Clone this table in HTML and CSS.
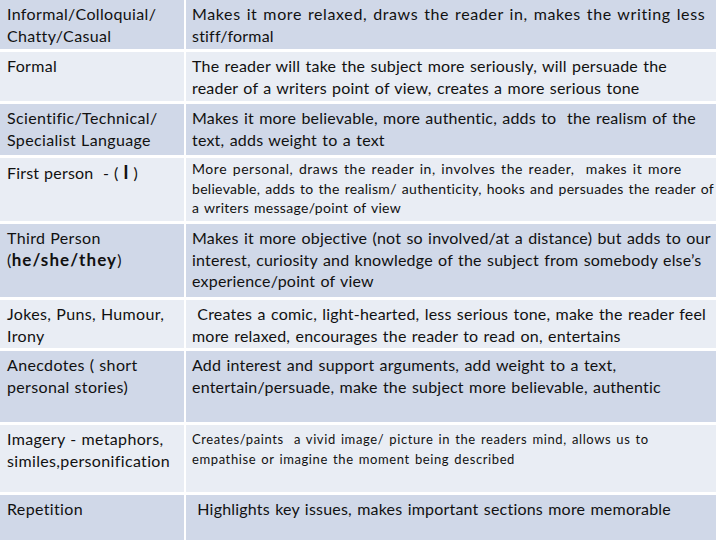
FILE: index.html
```html
<!DOCTYPE html>
<html>
<head>
<meta charset="utf-8">
<link rel="stylesheet" href="styles.css">
</head>
<body>
<div class="table">
  <div class="cell key dark">Informal/Colloquial/<br>Chatty/Casual</div>
  <div class="cell desc dark"><span class="wide">Makes it more relaxed, draws the reader in, makes the writing less</span><br>stiff/formal</div>

  <div class="cell key light">Formal</div>
  <div class="cell desc light">The reader will take the subject more seriously, will persuade the<br>reader of a writers point of view, creates a more serious tone</div>

  <div class="cell key dark">Scientific/Technical/<br>Specialist Language</div>
  <div class="cell desc dark">Makes it more believable, more authentic, adds to&nbsp; the realism of the<br>text, adds weight to a text</div>

  <div class="cell key light first">First person&nbsp; - ( <span class="big">I</span> )</div>
  <div class="cell desc light small tight"><span class="wider">More personal, draws the reader in, involves the reader,&nbsp; makes it more</span><br>believable, adds to the realism/ authenticity, hooks and persuades the reader of<br>a writers message/point of view</div>

  <div class="cell key dark">Third Person<br>(<span class="bold">he/she/they</span>)</div>
  <div class="cell desc dark">Makes it more objective (not so involved/at a distance) but adds to our<br>interest, curiosity and knowledge of the subject from somebody else’s<br>experience/point of view</div>

  <div class="cell key light">Jokes, Puns, Humour,<br>Irony</div>
  <div class="cell desc light">&nbsp;Creates a comic, light-hearted, less serious tone, make the reader feel<br>more relaxed, encourages the reader to read on, entertains</div>

  <div class="cell key dark">Anecdotes ( short<br>personal stories)</div>
  <div class="cell desc dark">Add interest and support arguments, add weight to a text,<br>entertain/persuade, make the subject more believable, authentic</div>

  <div class="cell key light">Imagery - metaphors,<br>similes,personification</div>
  <div class="cell desc light smaller">Creates/paints&nbsp; a vivid image/ picture in the readers mind, allows us to<br>empathise or imagine the moment being described</div>

  <div class="cell key dark">Repetition</div>
  <div class="cell desc dark">&nbsp;Highlights key issues, makes important sections more memorable</div>
</div>
</body>
</html>
```

FILE: styles.css
```css
html, body {
  margin: 0;
  padding: 0;
  background: #ffffff;
}

body {
  width: 720px;
  height: 540px;
  overflow: hidden;
  font-family: Lato, "Open Sans", sans-serif;
  color: #111111;
}

.table {
  display: grid;
  grid-template-columns: 184px 530px;
  grid-template-rows: 49px 49px 51px 63px 73px 48px 71px 67px 60px;
  column-gap: 2px;
  row-gap: 3px;
  width: 716px;
}

.cell {
  box-sizing: border-box;
  padding-top: 3px;
  font-size: 16px;
  line-height: 21.5px;
  white-space: nowrap;
  overflow: hidden;
}

.key {
  padding-left: 7px;
  letter-spacing: 0.35px;
  word-spacing: 0.5px;
}

.desc {
  padding-left: 6px;
  letter-spacing: 0.2px;
  word-spacing: 1px;
}

.wide {
  letter-spacing: 0.62px;
  word-spacing: 1.2px;
}

.dark { background: #d0d8e8; }
.light { background: #e9edf4; }

.small {
  font-size: 14px;
  letter-spacing: 0.3px;
  word-spacing: 1.1px;
}

.wider {
  letter-spacing: 0.55px;
  word-spacing: 1.5px;
}

.tight {
  padding-top: 1px;
  line-height: 19.5px;
}

.smaller {
  padding-top: 4px;
  font-size: 13px;
  line-height: 20px;
  letter-spacing: 0.6px;
  word-spacing: 1.2px;
}

.first {
  padding-top: 4px;
  letter-spacing: 0.2px;
}

.big {
  font-weight: 700;
  font-size: 18px;
}

.bold {
  font-weight: 700;
  font-size: 17px;
  letter-spacing: 1.1px;
}
```
